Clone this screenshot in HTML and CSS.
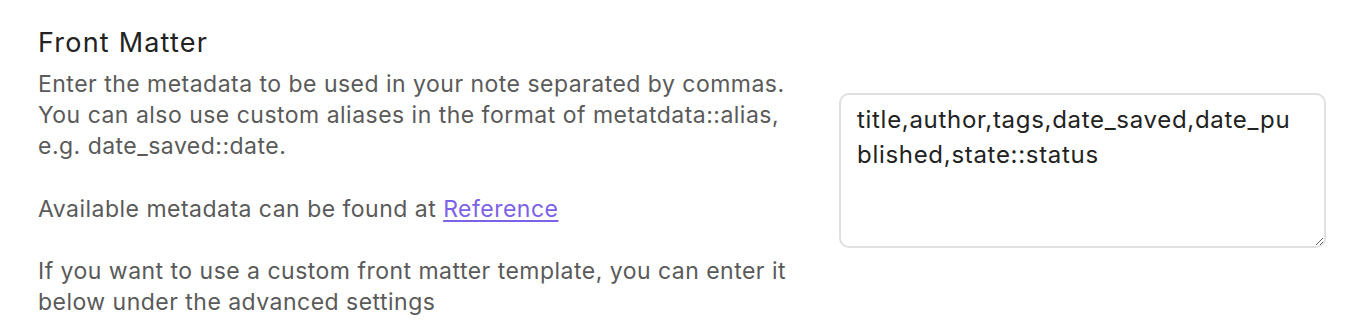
FILE: index.html
```html
<!DOCTYPE html>
<html>
<head>
<meta charset="utf-8">
<link rel="stylesheet" href="styles.css">
</head>
<body>
<div class="setting-item">
  <div class="setting-info">
    <div class="setting-name">Front Matter</div>
    <div class="setting-desc">Enter the metadata to be used in your note separated by commas.<br>You can also use custom aliases in the format of metatdata::alias,<br>e.g. date_saved::date.<br><br>Available metadata can be found at <a class="link" href="#">Reference</a><br><br>If you want to use a custom front matter template, you can enter it<br>below under the advanced settings</div>
  </div>
  <div class="setting-control">
    <textarea class="field" spellcheck="false">title,author,tags,date_saved,date_published,state::status</textarea>
  </div>
</div>
</body>
</html>
```
FILE: styles.css
```css
html, body {
  margin: 0;
  padding: 0;
  background: #ffffff;
}
body {
  font-family: Inter, "Noto Sans", sans-serif;
}
.setting-item {
  display: flex;
  align-items: flex-start;
  padding: 26px 34px 0 38px;
  gap: 40px;
}
.setting-info {
  flex: 1 1 auto;
}
.setting-name {
  font-size: 27px;
  line-height: 34px;
  letter-spacing: 1.2px;
  color: #222222;
  margin-bottom: 9px;
}
.setting-desc {
  font-size: 23px;
  line-height: 31.2px;
  letter-spacing: 0.48px;
  color: #5a5a5a;
}
.link {
  color: #7c62e6;
  text-decoration: underline;
  text-underline-offset: 3px;
}
.setting-control {
  flex: 0 0 auto;
  padding-top: 67px;
}
.field {
  display: block;
  box-sizing: border-box;
  width: 487px;
  height: 155px;
  margin: 0;
  padding: 7px 27px 10px 16px;
  border: 2px solid #e0e0e0;
  border-radius: 10px;
  font-family: Inter, "Noto Sans", sans-serif;
  font-size: 24px;
  line-height: 35px;
  letter-spacing: 0.7px;
  color: #222222;
  background: #ffffff;
  outline: none;
  overflow-wrap: break-word;
  word-break: break-all;
}
```
